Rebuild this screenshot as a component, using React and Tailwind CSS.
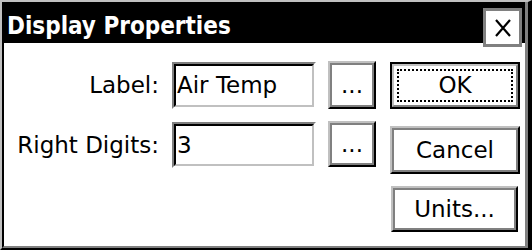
import React from "react";

function Sunken({ children }) {
    return (
        <div className="h-full border-t-2 border-l-2 border-t-[#808080] border-l-[#808080] border-r-2 border-b-2 border-r-white border-b-white">
            <div className="h-full border-t-2 border-l-2 border-t-black border-l-black border-r-2 border-b-2 border-r-[#c0c0c0] border-b-[#c0c0c0] bg-white flex items-center pl-[1px] text-[23px] text-black">
                {children}
            </div>
        </div>
    );
}

function Raised({ children, className = "" }) {
    return (
        <div
            className={
                "border-t-2 border-l-2 border-t-[#c0c0c0] border-l-[#c0c0c0] border-r-2 border-b-2 border-r-black border-b-black " +
                className
            }
        >
            <div className="h-full border-t-2 border-l-2 border-t-[#808080] border-l-[#808080] border-r-2 border-b-2 border-r-[#808080] border-b-[#808080] bg-white flex items-center justify-center text-[23px] text-black">
                {children}
            </div>
        </div>
    );
}

export default function App() {
    return (
        <div className="w-[532px] h-[250px] bg-white font-['DejaVu_Sans',sans-serif] leading-none overflow-hidden">
            <div className="w-full h-full flex flex-col border-t-2 border-l-2 border-t-[#c0c0c0] border-l-[#c0c0c0] border-r-4 border-b-2 border-r-black border-b-black">
                <div className="h-full flex flex-col border-r-3 border-b-2 border-r-[#808080] border-b-[#808080] border-l-2 border-l-black">
                    {/* title bar */}
                    <div className="h-[41px] bg-black flex items-start justify-between pl-[3px] pr-[3px] shrink-0">
                        <span className="text-white font-bold text-[24px] mt-[12px] font-['DejaVu_Sans_Condensed','DejaVu_Sans',sans-serif]">
                            Display Properties
                        </span>
                        <button className="mt-[6px] w-[39px] h-[39px] bg-white border-3 border-[#808080] flex items-center justify-center shrink-0">
                            <svg width="16" height="18" viewBox="0 0 16 18">
                                <path d="M1 1 L15 17 M15 1 L1 17" stroke="black" strokeWidth="2.2" />
                            </svg>
                        </button>
                    </div>

                    {/* body */}
                    <div className="flex pt-[19px] pl-[10px]">
                        <div className="grid grid-cols-[146px_144px_48px] grid-rows-[47px_46px] gap-x-[12px] gap-y-[13px]">
                            <div className="flex items-center justify-end text-[23px] text-black pr-[1px]">Label:</div>
                            <Sunken>Air Temp</Sunken>
                            <Raised className="h-[48px] -mt-[1px]">
                                <span>...</span>
                            </Raised>
                            <div className="flex items-center justify-end text-[23px] text-black pr-[1px]">Right Digits:</div>
                            <Sunken>3</Sunken>
                            <Raised className="h-[46px] -mt-[1px]">
                                <span>...</span>
                            </Raised>
                        </div>
                        <div className="flex flex-col ml-[14px] w-[130px]">
                            <div className="h-[47px] border-2 border-black">
                                <div className="h-full border-t-2 border-l-2 border-t-[#c0c0c0] border-l-[#c0c0c0] border-r-2 border-b-2 border-r-[#808080] border-b-[#808080] bg-white p-[3px]">
                                    <div className="h-full border-2 border-dotted border-black flex items-center justify-center text-[23px] text-black">
                                        OK
                                    </div>
                                </div>
                            </div>
                            <Raised className="h-[48px] mt-[17px]">Cancel</Raised>
                            <Raised className="h-[46px] mt-[12px] w-[127px] ml-[1px]">Units...</Raised>
                        </div>
                    </div>
                </div>
            </div>
        </div>
    );
}
